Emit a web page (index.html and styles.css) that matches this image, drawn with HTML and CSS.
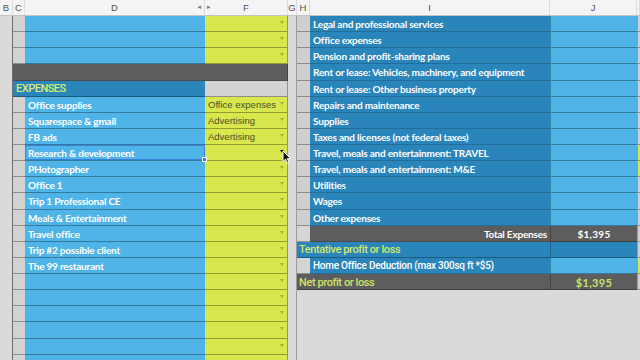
FILE: index.html
```html
<!DOCTYPE html>
<html lang="en">

<head>
    <meta charset="UTF-8">
    <meta name="viewport" content="width=device-width, initial-scale=1.0">
    <title>Schedule C expenses</title>
    <link rel="stylesheet" href="styles.css">
</head>

<body>

    <div class="sheet">

        <!-- column letters -->
        <div class="head">
            <div class="hcol w-b">B</div>
            <div class="hcol w-c">C</div>
            <div class="hcol w-d">D<span class="hide-l">&#9666;</span></div>
            <div class="hcol w-f"><span class="hide-r">&#9656;</span>F</div>
            <div class="hcol w-g">G</div>
            <div class="hcol w-h">H</div>
            <div class="hcol w-i">I</div>
            <div class="hcol w-j">J</div>
            <div class="hcol w-k"></div>
        </div>

        <div class="grid">
            <div class="spacer w-b"></div>

            <!-- left table: expense list -->
            <div class="block left">
                <div class="row"><div class="cell ind"></div><div class="cell name"></div><div class="cell cat"></div></div>
                <div class="row"><div class="cell ind"></div><div class="cell name"></div><div class="cell cat"></div></div>
                <div class="row"><div class="cell ind"></div><div class="cell name"></div><div class="cell cat"></div></div>
                <div class="row row-dark"><div class="cell ind"></div><div class="cell name"></div><div class="cell cat"></div></div>
                <div class="row"><div class="cell section">EXPENSES</div><div class="cell blank"></div></div>
                <div class="row"><div class="cell ind"></div><div class="cell name">Office supplies</div><div class="cell cat">Office expenses</div></div>
                <div class="row"><div class="cell ind"></div><div class="cell name">Squarespace &amp; gmail</div><div class="cell cat">Advertising</div></div>
                <div class="row"><div class="cell ind"></div><div class="cell name">FB ads</div><div class="cell cat">Advertising</div></div>
                <div class="row"><div class="cell ind"></div><div class="cell name selected">Research &amp; development<span class="handle"></span></div><div class="cell cat active"></div></div>
                <div class="row"><div class="cell ind"></div><div class="cell name">PHotographer</div><div class="cell cat"></div></div>
                <div class="row"><div class="cell ind"></div><div class="cell name">Office 1</div><div class="cell cat"></div></div>
                <div class="row"><div class="cell ind"></div><div class="cell name">Trip 1 Professional CE</div><div class="cell cat"></div></div>
                <div class="row"><div class="cell ind"></div><div class="cell name">Meals &amp; Entertainment</div><div class="cell cat"></div></div>
                <div class="row"><div class="cell ind"></div><div class="cell name">Travel office</div><div class="cell cat"></div></div>
                <div class="row"><div class="cell ind"></div><div class="cell name">Trip #2 possible client</div><div class="cell cat"></div></div>
                <div class="row"><div class="cell ind"></div><div class="cell name">The 99 restaurant</div><div class="cell cat"></div></div>
                <div class="row"><div class="cell ind"></div><div class="cell name"></div><div class="cell cat"></div></div>
                <div class="row"><div class="cell ind"></div><div class="cell name"></div><div class="cell cat"></div></div>
                <div class="row"><div class="cell ind"></div><div class="cell name"></div><div class="cell cat"></div></div>
                <div class="row"><div class="cell ind"></div><div class="cell name"></div><div class="cell cat"></div></div>
                <div class="row"><div class="cell ind"></div><div class="cell name"></div><div class="cell cat"></div></div>
                <div class="row"><div class="cell ind"></div><div class="cell name"></div><div class="cell cat"></div></div>
            </div>

            <div class="spacer w-g"></div>

            <!-- right table: schedule C lines -->
            <div class="block right">
                <div class="row"><div class="cell ind"></div><div class="cell item">Legal and professional services</div><div class="cell amt"></div><div class="cell edge"></div></div>
                <div class="row"><div class="cell ind"></div><div class="cell item">Office expenses</div><div class="cell amt"></div><div class="cell edge"></div></div>
                <div class="row"><div class="cell ind"></div><div class="cell item">Pension and profit-sharing plans</div><div class="cell amt"></div><div class="cell edge"></div></div>
                <div class="row"><div class="cell ind"></div><div class="cell item">Rent or lease: Vehicles, machinery, and equipment</div><div class="cell amt"></div><div class="cell edge"></div></div>
                <div class="row"><div class="cell ind"></div><div class="cell item">Rent or lease: Other business property</div><div class="cell amt"></div><div class="cell edge"></div></div>
                <div class="row"><div class="cell ind"></div><div class="cell item">Repairs and maintenance</div><div class="cell amt"></div><div class="cell edge"></div></div>
                <div class="row"><div class="cell ind"></div><div class="cell item">Supplies</div><div class="cell amt"></div><div class="cell edge"></div></div>
                <div class="row"><div class="cell ind"></div><div class="cell item">Taxes and licenses (not federal taxes)</div><div class="cell amt"></div><div class="cell edge"></div></div>
                <div class="row"><div class="cell ind"></div><div class="cell item">Travel, meals and entertainment: TRAVEL</div><div class="cell amt"></div><div class="cell edge lit"></div></div>
                <div class="row"><div class="cell ind"></div><div class="cell item">Travel, meals and entertainment: M&amp;E</div><div class="cell amt"></div><div class="cell edge lit"></div></div>
                <div class="row"><div class="cell ind"></div><div class="cell item">Utilities</div><div class="cell amt"></div><div class="cell edge"></div></div>
                <div class="row"><div class="cell ind"></div><div class="cell item">Wages</div><div class="cell amt"></div><div class="cell edge"></div></div>
                <div class="row"><div class="cell ind"></div><div class="cell item">Other expenses</div><div class="cell amt"></div><div class="cell edge"></div></div>
                <div class="row row-total"><div class="cell ind"></div><div class="cell item">Total Expenses</div><div class="cell amt">$1,395</div><div class="cell edge"></div></div>
                <div class="row row-sub"><div class="cell label">Tentative profit or loss</div><div class="cell amt"></div><div class="cell edge"></div></div>
                <div class="row row-home"><div class="cell ind"></div><div class="cell item">Home Office Deduction (max 300sq ft *$5)</div><div class="cell amt"></div><div class="cell edge lit"></div></div>
                <div class="row row-net"><div class="cell label">Net profit or loss</div><div class="cell amt">$1,395</div><div class="cell edge"></div></div>
            </div>
        </div>

        <!-- mouse pointer over the dropdown -->
        <svg class="pointer" width="10" height="14" viewBox="0 0 10 14">
            <path d="M1 1 L1 11.5 L3.6 9.2 L5.4 13 L7 12.3 L5.3 8.6 L8.6 8.6 Z" fill="#111" stroke="#fff" stroke-width="1"/>
        </svg>

    </div>

</body>

</html>
```

FILE: styles.css
```css
/* Reset */
* {
    margin: 0;
    padding: 0;
    box-sizing: border-box;
}

body {
    background: #dadada;
    font-family: "Lato", "Open Sans", sans-serif;
}

.sheet {
    position: relative;
    width: 640px;
    height: 360px;
    overflow: hidden;
    background: #dadada;
}

/* column widths, shared by header and body */
.w-b { width: 13px; }
.w-c { width: 12px; }
.w-d { width: 180px; }
.w-f { width: 83px; }
.w-g { width: 9px; }
.w-h { width: 13px; }
.w-i { width: 240px; }
.w-j { width: 87px; }
.w-k { width: 3px; }

/* Header with column letters */
.head {
    display: flex;
    height: 16px;
    background: #f4f4f4;
    border-bottom: 1px solid #c4c4c4;
}

.hcol {
    position: relative;
    flex: none;
    display: flex;
    align-items: center;
    justify-content: center;
    font-family: "Liberation Sans", Arial, sans-serif;
    font-size: 9.5px;
    color: #555;
    border-right: 1px solid #dcdcdc;
}

.hide-l,
.hide-r {
    position: absolute;
    top: 3px;
    font-family: "DejaVu Sans", sans-serif;
    font-size: 7px;
    color: #777;
}

.hide-l { right: 3px; }
.hide-r { left: 2px; }

/* Body */
.grid {
    display: flex;
    height: 344px;
}

.spacer {
    flex: none;
    background: #dadada;
}

.w-b.spacer { border-right: 1px solid #6f6f6f; }
.w-g.spacer { border-right: 1px solid #9a9a9a; }

.block {
    flex: none;
    display: flex;
    flex-direction: column;
}

.left { width: 275px; }
.right { width: 343px; }

.row {
    display: flex;
    flex: none;
    height: 16.14px;
}

.cell {
    flex: none;
    display: flex;
    align-items: center;
    height: 100%;
    padding: 1px 3px 0;
    white-space: nowrap;
    overflow: hidden;
    border-bottom: 1px solid rgba(0, 0, 0, 0.32);
    font-size: 10px;
    font-weight: bold;
    color: #fff;
}

/* left table */
.ind {
    width: 12px;
    background: #d2d2d2;
}

.right .ind {
    width: 13px;
    background: #cfcfcf;
}

.name {
    width: 180px;
    background: #4fb4e8;
    letter-spacing: -0.2px;
}

.cat {
    width: 83px;
    padding-top: 0;
    background: #d7e74c;
    font-family: "Liberation Sans", Arial, sans-serif;
    font-weight: normal;
    font-size: 9.5px;
    color: #4e4e32;
    border-right: 1px solid rgba(0, 0, 0, 0.3);
}

/* dropdown chip arrow */
.cat::after {
    content: "";
    margin-left: auto;
    align-self: flex-start;
    margin-top: 5px;
    border-left: 2.5px solid transparent;
    border-right: 2.5px solid transparent;
    border-top: 3px solid rgba(0, 0, 0, 0.25);
}

.cat.active::after { border-top-color: #111; }

.row-dark .cell {
    background: #5d5d5d;
    border-bottom-color: #4a4a4a;
}

.row-dark .cat::after { display: none; }

.section {
    width: 192px;
    background: #2a85bb;
    font-family: "Roboto", sans-serif;
    font-weight: 500;
    font-size: 11px;
    letter-spacing: -0.5px;
    color: #d6ec6e;
    padding-top: 1px;
}

.blank {
    width: 83px;
    background: #d3d3d3;
    border-right: 1px solid rgba(0, 0, 0, 0.3);
}

/* selected cell */
.selected {
    position: relative;
    overflow: visible;
    box-shadow: inset 0 0 0 1px #3b7fd6;
}

.handle {
    position: absolute;
    right: -2px;
    bottom: -2px;
    width: 5px;
    height: 5px;
    background: #3b7fd6;
    border: 1px solid #fff;
}

/* right table */
.item {
    width: 240px;
    background: #2a85bb;
    letter-spacing: -0.2px;
    border-bottom-color: rgba(0, 0, 0, 0.18);
}

.amt {
    width: 87px;
    justify-content: center;
    background: #4fb4e8;
    border-left: 1px solid rgba(0, 0, 0, 0.25);
}

.edge {
    width: 3px;
    padding: 0;
    background: #d0d0d0;
    border-left: 1px solid #9a9a9a;
}

.edge.lit { background: #d7e74c; }

.row-total .ind { background: #d6d6d6; }

.row-total .item {
    justify-content: flex-end;
    background: #5d5d5d;
}

.row-total .amt {
    background: #5d5d5d;
    letter-spacing: 0.3px;
}

.label {
    width: 253px;
    padding: 1px 2px 0;
    font-family: "Roboto", sans-serif;
    font-weight: 500;
    font-size: 11px;
    letter-spacing: -0.4px;
    color: #d2e86a;
}

.row-sub .label,
.row-sub .amt {
    background: #2a85bb;
}

.row-home .ind { background: #d4d4d4; }

.row-home .item {
    font-family: "Roboto", sans-serif;
    font-weight: 500;
    letter-spacing: -0.25px;
}

.row-net .label,
.row-net .amt {
    background: #5d5d5d;
    color: #cfe06a;
}

.row-net .amt {
    font-size: 11px;
    letter-spacing: 0.3px;
}

/* mouse pointer overlay */
.pointer {
    position: absolute;
    left: 282px;
    top: 150px;
}
```
